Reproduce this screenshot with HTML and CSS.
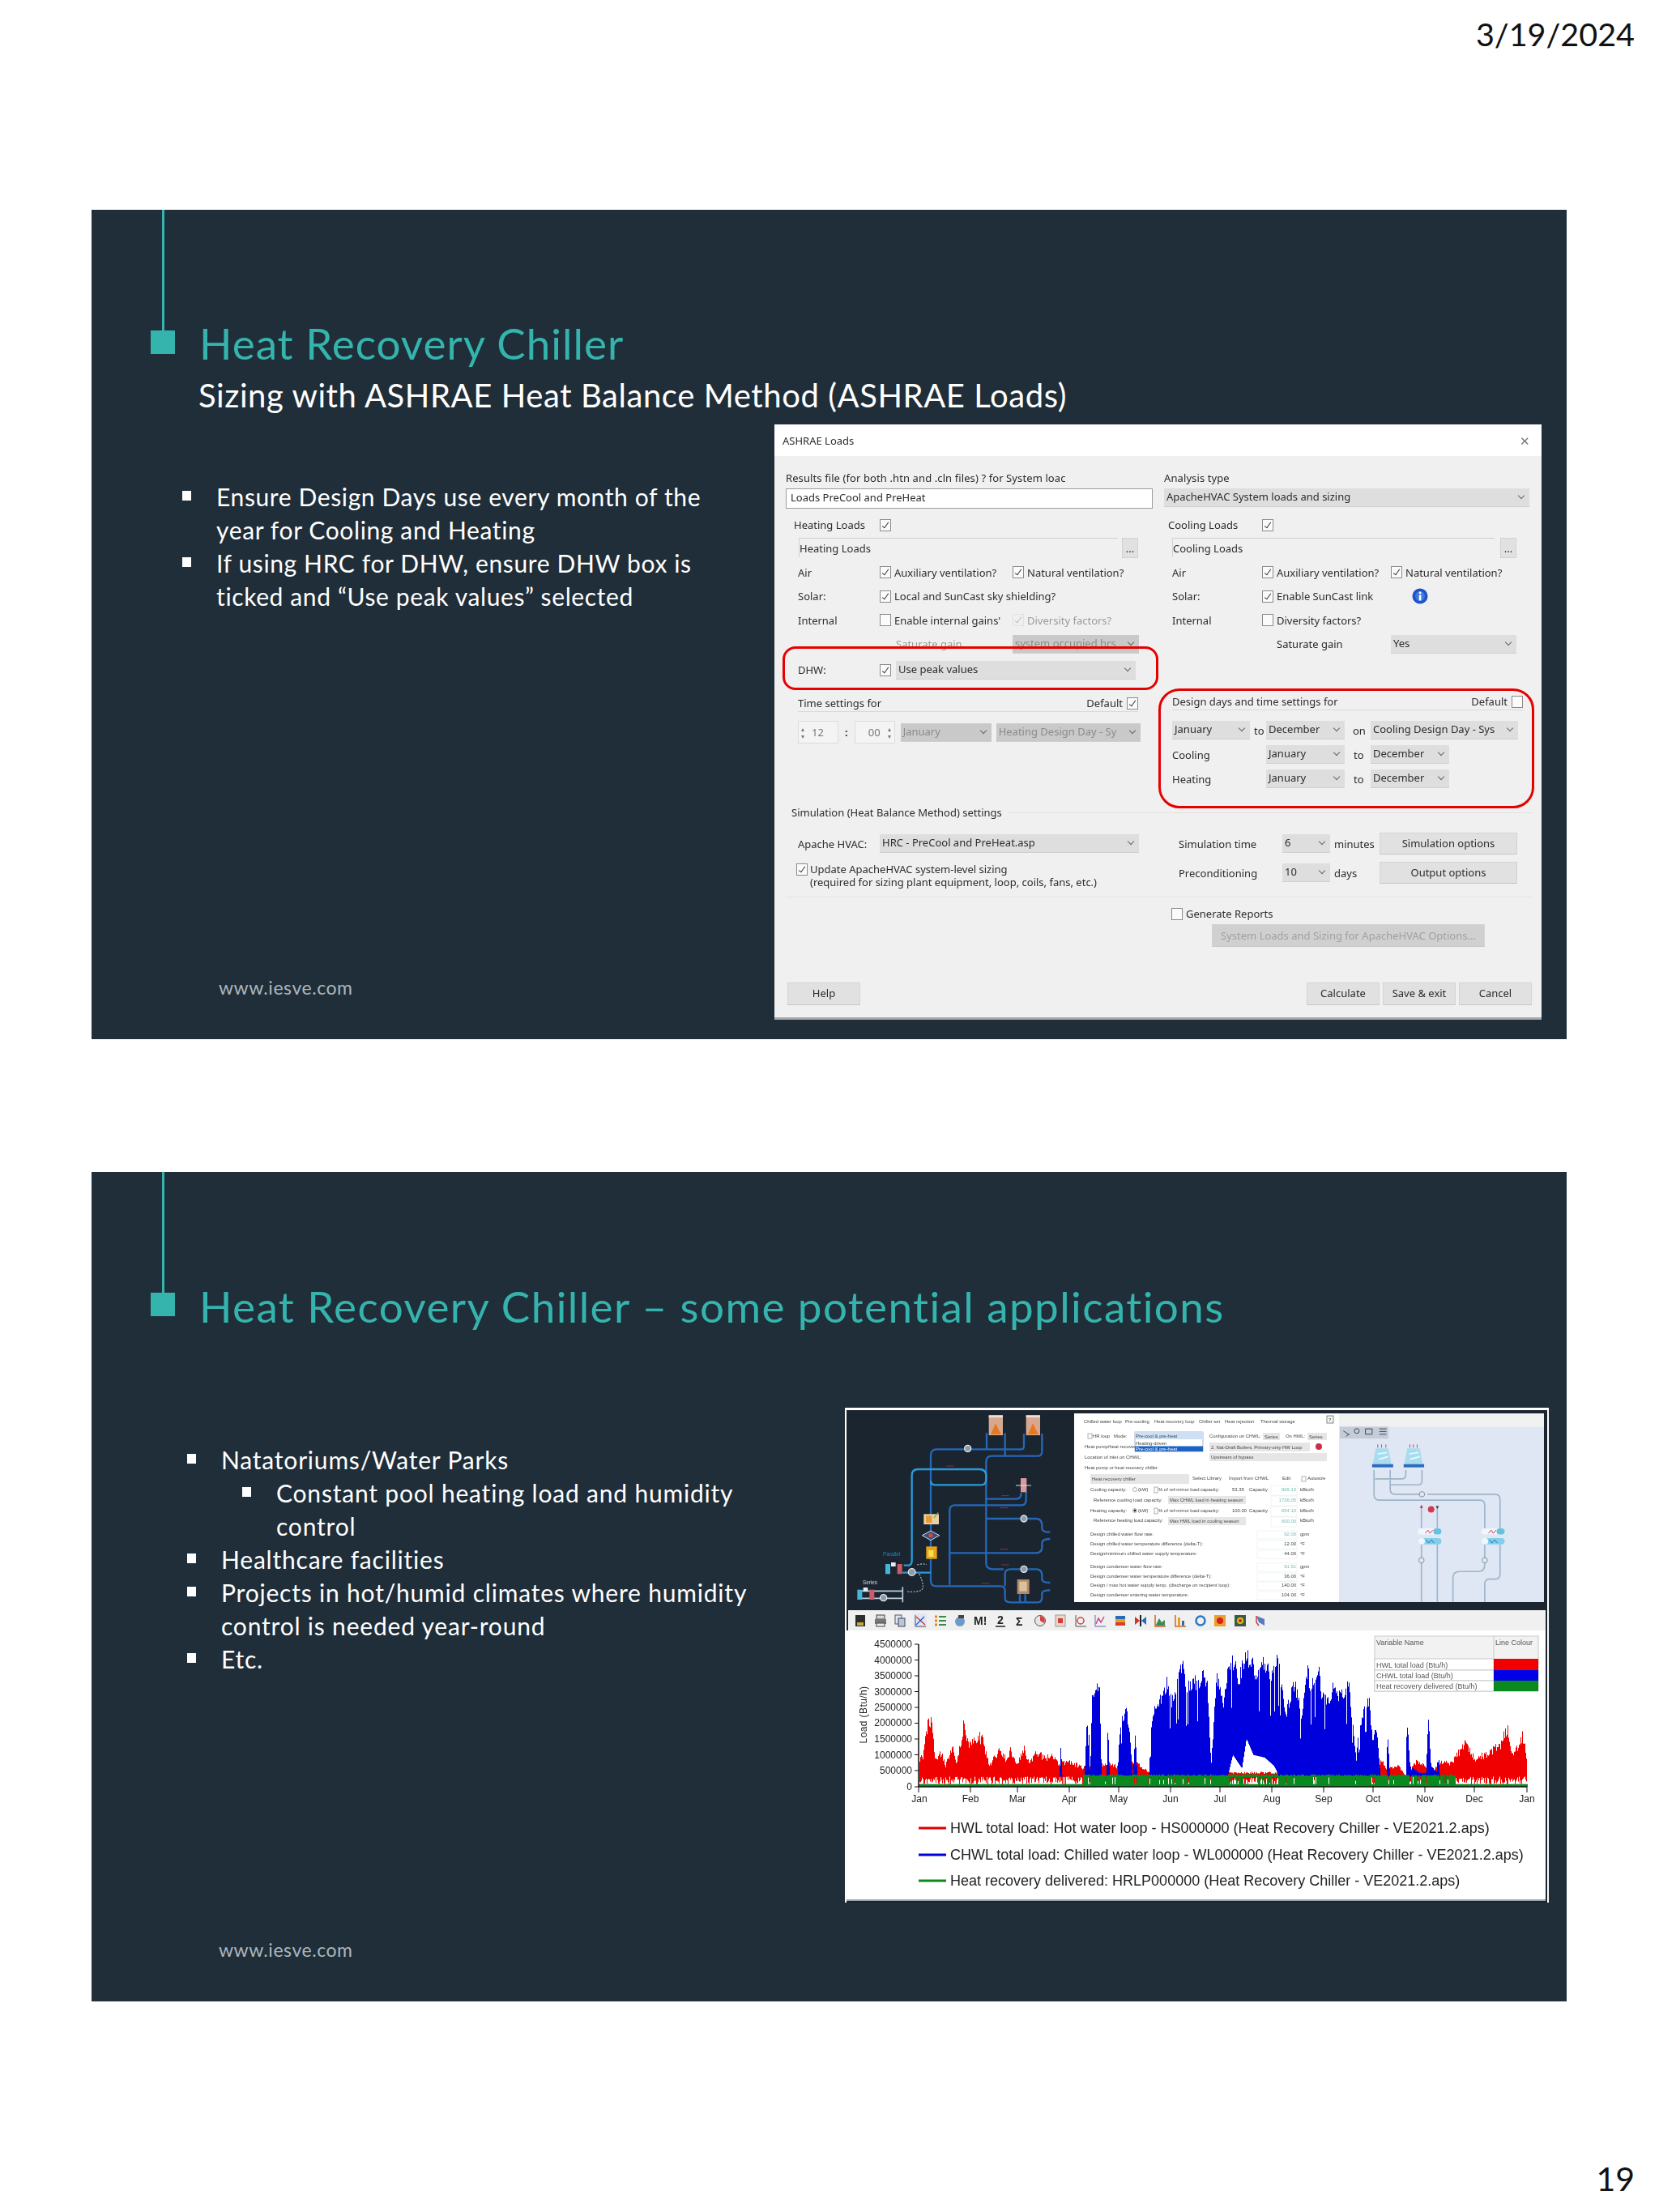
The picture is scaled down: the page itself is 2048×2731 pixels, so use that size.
FILE: index.html
```html
<!DOCTYPE html>
<html>
<head>
<meta charset="UTF-8">
<title>Heat Recovery Chiller</title>
<link rel="stylesheet" href="styles.css">
</head>
<body>
<div class="page">

<div class="date">3/19/2024</div>

<!-- slide 1 -->
<div class="slide slide-a">
  <div class="accent-line"></div>
  <div class="accent-box"></div>
  <div class="slide-head">
    <h1>Heat Recovery Chiller</h1>
    <h2>Sizing with ASHRAE Heat Balance Method (ASHRAE Loads)</h2>
  </div>
  <div class="slide-main">
    <div class="slide-text">
      <ul class="bullets">
        <li>Ensure Design Days use every month of the<br>year for Cooling and Heating</li>
        <li>If using HRC for DHW, ensure DHW box is<br>ticked and “Use peak values” selected</li>
      </ul>
      <div class="site">www.iesve.com</div>
    </div>

    <div class="dlg">
      <div class="dlg-title"><span>ASHRAE Loads</span><span class="dlg-x">✕</span></div>

      <div class="dlg-main">
        <div class="col-l">
          <div class="cap">Results file (for both .htn and .cln files) ? for System loac</div>
          <div class="input">Loads PreCool and PreHeat</div>
          <div class="grp-head"><span class="gh-w">Heating Loads</span><i class="chk on"></i></div>
          <div class="name-row"><div class="name-box">Heating Loads</div><div class="dots">...</div></div>
          <div class="opt"><span class="opt-l">Air</span><span class="opt-a"><i class="chk on"></i>Auxiliary ventilation?</span><span class="opt-a"><i class="chk on"></i>Natural ventilation?</span></div>
          <div class="opt"><span class="opt-l">Solar:</span><span class="opt-a wide"><i class="chk on"></i>Local and SunCast sky shielding?</span></div>
          <div class="opt"><span class="opt-l">Internal</span><span class="opt-a"><i class="chk"></i>Enable internal gains'</span><span class="opt-a off"><i class="chk on dim"></i>Diversity factors?</span></div>
          <div class="opt"><span class="opt-l"></span><span class="opt-a off sat-l">Saturate gain</span><div class="sel off w156">system occupied hrs</div></div>
          <div class="opt dhw"><span class="opt-l">DHW:</span><i class="chk on"></i><div class="sel w296">Use peak values</div></div>
          <div class="time-head"><span>Time settings for</span><span class="def">Default<i class="chk on"></i></span></div>
          <div class="time-row off">
            <div class="spin"><b>▴<br>▾</b>12</div><span class="colon">:</span>
            <div class="spin rev">00<b>▴<br>▾</b></div>
            <div class="sel off w112">January</div>
            <div class="sel off w178">Heating Design Day - Sy</div>
          </div>
        </div>

        <div class="col-r">
          <div class="cap">Analysis type</div>
          <div class="sel w451">ApacheHVAC System loads and sizing</div>
          <div class="grp-head r"><span class="gh-w">Cooling Loads</span><i class="chk on"></i></div>
          <div class="name-row r"><div class="name-box">Cooling Loads</div><div class="dots">...</div></div>
          <div class="opt r"><span class="opt-l">Air</span><span class="opt-b"><i class="chk on"></i>Auxiliary ventilation?</span><span class="opt-b"><i class="chk on"></i>Natural ventilation?</span></div>
          <div class="opt r"><span class="opt-l">Solar:</span><span class="opt-b"><i class="chk on"></i>Enable SunCast link</span>
            <svg class="info" viewBox="0 0 20 20"><circle cx="10" cy="10" r="9.5" fill="#1f52c8"/><circle cx="10" cy="10" r="6" fill="#3f78e0"/><rect x="8.8" y="8.5" width="2.6" height="7" fill="#fff"/><rect x="8.8" y="4.6" width="2.6" height="2.5" fill="#fff"/></svg></div>
          <div class="opt r"><span class="opt-l">Internal</span><span class="opt-b"><i class="chk"></i>Diversity factors?</span></div>
          <div class="opt r"><span class="opt-l"></span><span class="opt-b sat-r">Saturate gain</span><div class="sel w155">Yes</div></div>
          <div class="opt dhw r"></div>
          <div class="time-head r"><span>Design days and time settings for</span><span class="def">Default<i class="chk"></i></span></div>
          <div class="month-row first">
            <div class="sel w96">January</div><span class="to">to</span><div class="sel w97">December</div><span class="on-lab">on</span><div class="sel w182">Cooling Design Day - Sys</div>
          </div>
          <div class="month-row">
            <span class="m-lab">Cooling</span><div class="sel w97">January</div><span class="to2">to</span><div class="sel w97">December</div>
          </div>
          <div class="month-row">
            <span class="m-lab">Heating</span><div class="sel w97">January</div><span class="to2">to</span><div class="sel w97">December</div>
          </div>
        </div>
      </div>

      <div class="sim-cap"><span>Simulation (Heat Balance Method) settings</span></div>
      <div class="sim">
        <div class="sim-l">
          <div class="apache"><span class="opt-l short">Apache HVAC:</span><div class="sel w320">HRC - PreCool and PreHeat.asp</div></div>
          <div class="update"><i class="chk on"></i><div>Update ApacheHVAC system-level sizing<br>(required for sizing plant equipment, loop, coils, fans, etc.)</div></div>
        </div>
        <div class="sim-r">
          <div class="sim-row"><span class="sim-lab">Simulation time</span><div class="sel w59">6</div><span class="unit">minutes</span><div class="btn w170">Simulation options</div></div>
          <div class="sim-row"><span class="sim-lab">Preconditioning</span><div class="sel w59">10</div><span class="unit">days</span><div class="btn w170">Output options</div></div>
        </div>
      </div>

      <div class="reports">
        <div class="rep-head"><i class="chk"></i>Generate Reports</div>
        <div class="btn rep-btn off">System Loads and Sizing for ApacheHVAC Options...</div>
      </div>

      <div class="dlg-foot">
        <div class="btn w90">Help</div>
        <div class="foot-r"><div class="btn w90">Calculate</div><div class="btn w90">Save &amp; exit</div><div class="btn w90">Cancel</div></div>
      </div>

      <div class="ring ring-a"></div>
      <div class="ring ring-b"></div>
    </div>
  </div>
</div>

<!-- slide 2 -->
<div class="slide slide-b">
  <div class="accent-line"></div>
  <div class="accent-box"></div>
  <div class="slide-head">
    <h1>Heat Recovery Chiller – some potential applications</h1>
  </div>
  <div class="slide-main">
    <div class="slide-text">
      <ul class="bullets">
        <li>Natatoriums/Water Parks
          <ul><li>Constant pool heating load and humidity<br>control</li></ul>
        </li>
        <li>Healthcare facilities</li>
        <li>Projects in hot/humid climates where humidity<br>control is needed year-round</li>
        <li>Etc.</li>
      </ul>
      <div class="site">www.iesve.com</div>
    </div>

    <div class="shot">
      <div class="shot-top">
        <svg class="plant" viewBox="18 33 843 732">
          <g fill="none" stroke="#2568b8" stroke-width="7">
            <path d="M330 640V200Q330 178 352 178H665Q675 178 675 165V120"/>
            <path d="M535 600V225Q535 203 555 203H725Q742 203 742 185V120"/>
            <path d="M537 178V118M605 203V118"/>
            <path d="M330 640V665Q330 685 352 685H590Q605 685 605 705V730Q605 745 625 745H725Q742 745 742 725V712Q742 700 772 700"/>
            <path d="M605 685V640Q605 622 625 622H660M690 622H720Q742 622 742 645V660Q742 672 772 672"/>
            <path d="M660 745V715M680 745V715"/>
            <path d="M535 435H660M690 435H720Q742 435 742 460V470Q742 485 772 485"/>
            <path d="M400 562H720Q742 562 742 540V525Q742 510 772 510"/>
            <path d="M400 680V405Q400 385 420 385H665Q683 385 683 365V335"/>
            <path d="M535 362H645Q665 362 665 340"/>
            <path d="M535 600Q535 622 560 622H600"/>
          </g>
          <g fill="none" stroke="#2a9ad8" stroke-width="7">
            <path d="M230 608H245Q260 608 260 590V275Q260 252 282 252H510Q535 252 535 275V290Q535 310 515 310H345Q330 310 330 295"/>
            <path d="M225 635H330"/>
          </g>
          <path d="M65 703H225M65 730H225M226 688V745" fill="none" stroke="#b9cfdd" stroke-width="5"/>
          <path d="M280 606Q300 600 315 605M288 640Q310 690 295 700Q280 708 240 705" fill="none" stroke="#dfe8ee" stroke-width="3" stroke-dasharray="6 5"/>
          <path d="M388 240H415M592 350H620M585 395H615M585 548H615M592 606H620M518 675H548" stroke="#8c2f4a" stroke-width="3"/>
          <g fill="#d7a88f">
            <rect x="545" y="52" width="52" height="74"/>
            <rect x="683" y="52" width="52" height="74"/>
          </g>
          <path d="M570 82L552 122H590ZM708 82L690 122H728Z" fill="#e8781e"/>
          <rect x="545" y="52" width="52" height="8" fill="#efe0d2"/>
          <rect x="683" y="52" width="52" height="8" fill="#efe0d2"/>
          <rect x="663" y="285" width="22" height="52" fill="#d89aa0"/>
          <path d="M645 312H702" stroke="#e8e2d0" stroke-width="3"/>
          <rect x="304" y="418" width="56" height="38" fill="#e6d2a8"/>
          <rect x="312" y="424" width="22" height="26" fill="#e89a35"/>
          <path d="M342 432L358 412" stroke="#7fa84a" stroke-width="4"/>
          <path d="M298 497L330 480L362 497L330 515Z" fill="#38507e" stroke="#d8dde5" stroke-width="3"/>
          <circle cx="330" cy="497" r="8" fill="#d24a3a"/>
          <rect x="313" y="538" width="40" height="46" fill="#e8a31c"/>
          <rect x="322" y="552" width="18" height="24" fill="#f6df4a"/>
          <rect x="650" y="660" width="45" height="54" fill="#b58a66"/>
          <rect x="658" y="668" width="28" height="36" fill="#d9c2a0"/>
          <g fill="#46b6d6"><rect x="162" y="603" width="18" height="37"/><rect x="58" y="698" width="18" height="37"/></g>
          <g fill="#cf5a68"><rect x="206" y="603" width="18" height="37"/><rect x="103" y="698" width="18" height="37"/></g>
          <g fill="#e7ecef"><rect x="183" y="597" width="17" height="15"/><rect x="80" y="690" width="17" height="14"/></g>
          <g fill="#8f9bab" stroke="#e3e8ee" stroke-width="4">
            <circle cx="467" cy="175" r="12"/><circle cx="675" cy="435" r="12"/><circle cx="675" cy="622" r="12"/><circle cx="260" cy="633" r="13"/><circle cx="155" cy="728" r="12"/>
          </g>
          <text class="plant-lab blue" x="185" y="574" text-anchor="middle">Parallel</text>
          <text class="plant-lab" x="105" y="677" text-anchor="middle">Series</text>
        </svg>

        <div class="shot-panels">
          <svg class="form" viewBox="0 0 327 233">
            <g class="tx">
              <text x="12" y="12">Chilled water loop</text><text x="63" y="12">Pre-cooling</text><text x="99" y="12">Heat recovery loop</text><text x="154" y="12">Chiller set</text><text x="186" y="12">Heat rejection</text><text x="230" y="12">Thermal storage</text>
              <text x="23" y="30">HR loop</text><text x="49" y="30">Mode:</text><text x="167" y="30">Configuration on CHWL:</text><text x="261" y="30">On HWL:</text>
              <text x="13" y="43">Heat pump/heat recovery chiller:</text>
              <text x="13" y="56">Location of inlet on CHWL:</text>
              <text x="13" y="69">Heat pump or heat recovery chiller</text>
              <text x="146" y="82">Select Library</text><text x="191" y="82">Import from CHWL</text><text x="257" y="82">Edit</text><text x="288" y="82">Autosize</text>
              <text x="20" y="96">Cooling capacity:</text><text x="79" y="96">(kW)</text><text x="104" y="96">% of ref-mirror load capacity:</text><text x="195" y="96">53.35</text><text x="216" y="96">Capacity</text><text x="279" y="96">kBtu/h</text>
              <text x="24" y="109">Reference cooling load capacity:</text><text x="279" y="109">kBtu/h</text>
              <text x="20" y="122">Heating capacity:</text><text x="79" y="122">(kW)</text><text x="104" y="122">% of ref-mirror load capacity:</text><text x="195" y="122">100.00</text><text x="216" y="122">Capacity</text><text x="279" y="122">kBtu/h</text>
              <text x="24" y="134">Reference heating load capacity:</text><text x="279" y="134">kBtu/h</text>
              <text x="20" y="151">Design chilled water flow rate:</text><text x="279" y="151">gpm</text>
              <text x="20" y="163">Design chilled water temperature difference (delta-T):</text><text x="279" y="163">°F</text>
              <text x="20" y="175">Design/minimum chilled water supply temperature:</text><text x="279" y="175">°F</text>
              <text x="20" y="191">Design condenser water flow rate:</text><text x="279" y="191">gpm</text>
              <text x="20" y="203">Design condenser water temperature difference (delta-T):</text><text x="279" y="203">°F</text>
              <text x="20" y="214">Design / max hot water supply temp. (discharge on recipient loop):</text><text x="279" y="214">°F</text>
              <text x="20" y="226">Design condenser entering water temperature:</text><text x="279" y="226">°F</text>
            </g>
            <g class="fbox">
              <rect x="167" y="36" width="124" height="11"/><rect x="167" y="49" width="145" height="10"/>
              <rect x="233" y="24" width="21" height="9"/><rect x="288" y="24" width="24" height="9"/>
              <rect x="20" y="75" width="122" height="12"/>
              <rect x="116" y="102" width="96" height="10"/><rect x="116" y="128" width="96" height="10"/>
            </g>
            <g class="tx">
              <text x="235" y="31">Series</text><text x="290" y="31">Series</text>
              <text x="169" y="44">2. Nat-Draft Boilers, Primary-only HW Loop</text><text x="169" y="56">Upstream of bypass</text>
              <text x="22" y="83">Heat recovery chiller</text>
              <text x="118" y="109">Max CHWL load in heating season</text><text x="118" y="135">Max HWL load in cooling season</text>
            </g>
            <g class="fin">
              <rect x="243" y="89" width="32" height="12"/><rect x="243" y="102" width="32" height="12"/><rect x="243" y="115" width="32" height="12"/><rect x="243" y="128" width="32" height="12"/>
              <rect x="226" y="145" width="49" height="10"/><rect x="226" y="157" width="49" height="10"/><rect x="226" y="169" width="49" height="10"/><rect x="226" y="185" width="49" height="10"/><rect x="226" y="197" width="49" height="10"/><rect x="226" y="208" width="49" height="10"/><rect x="226" y="220" width="49" height="10"/>
            </g>
            <g class="tx end teal"><text x="274" y="96">969.13</text><text x="274" y="109">1726.05</text><text x="274" y="122">654.10</text><text x="274" y="135">600.00</text><text x="274" y="151">92.00</text><text x="274" y="191">91.51</text></g>
            <g class="tx end"><text x="274" y="163">12.00</text><text x="274" y="175">44.00</text><text x="274" y="203">36.00</text><text x="274" y="214">140.00</text><text x="274" y="226">104.00</text></g>
            <rect x="75" y="23" width="84" height="24" fill="#fff" stroke="#6a86b8" stroke-width=".6"/>
            <rect x="75" y="23" width="84" height="9" fill="#cfe0f4"/>
            <rect x="75" y="40.5" width="84" height="6.5" fill="#1a62c4"/>
            <g class="tx"><text x="76" y="30">Pre-cool &amp; pre-heat</text><text x="76" y="38.5">Heating-driven</text><text class="wt" x="76" y="46">Pre-cool &amp; pre-heat</text></g>
            <g fill="none" stroke="#666" stroke-width=".5"><rect x="17" y="25" width="5" height="6"/><rect x="99" y="91" width="4" height="7"/><rect x="99" y="117" width="4" height="7"/><rect x="281" y="78" width="5" height="6"/><circle cx="75" cy="94" r="2.5"/><circle cx="75" cy="120" r="2.5"/></g>
            <circle cx="75" cy="120" r="1.4" fill="#222"/>
            <circle cx="302" cy="41" r="4" fill="#c8304a"/>
            <rect x="312" y="3" width="8" height="9" fill="#f4f4f4" stroke="#555" stroke-width=".7"/>
            <text class="tx" x="314" y="10">?</text>
          </svg>

          <svg class="towers" viewBox="42 45 761 700">
            <rect x="42" y="45" width="761" height="49" fill="#f1f1f1"/>
            <rect x="45" y="94" width="180" height="44" fill="#c5ccd8"/>
            <g fill="none" stroke="#3d4a5a" stroke-width="3">
              <path d="M58 110L80 124M68 130L80 120"/><circle cx="108" cy="110" r="9"/><path d="M140 102H165V122H140ZM192 102H218M192 112H218M192 122H218"/>
            </g>
            <g fill="none" stroke="#9fb4c9" stroke-width="5">
              <path d="M172 255V345Q172 367 195 367H565Q583 367 583 385V475"/>
              <path d="M232 255V325Q232 345 250 345H340M370 345H620Q640 345 640 365V475"/>
              <path d="M232 310H335Q350 310 350 295V255"/>
              <path d="M175 288H275Q290 288 290 270V255"/>
              <path d="M348 392V470M407 392V470M348 530V745M407 530V745"/>
              <path d="M583 530V605Q583 632 560 632H490Q465 632 465 655V745"/>
              <path d="M640 530V640Q640 660 620 660H600Q583 660 583 680V745"/>
            </g>
            <g fill="#a8dcf0">
              <path d="M178 175H225L236 232H168Z"/><path d="M295 175H342L352 232H285Z"/>
            </g>
            <path d="M185 195L220 190M190 215L225 205M302 195L337 190M305 215L342 205" stroke="#e8f7fc" stroke-width="5"/>
            <g fill="#2a6dba"><rect x="165" y="233" width="78" height="12"/><rect x="282" y="233" width="76" height="12"/></g>
            <path d="M186 172V160M200 172V160M216 172V160M305 172V160M318 172V160M332 172V160" stroke="#c74a62" stroke-width="3"/>
            <g>
              <rect x="335" y="472" width="87" height="22" rx="11" fill="#f2f6fb"/><rect x="392" y="472" width="30" height="22" rx="11" fill="#63c2e0"/><path d="M362 490L372 478L380 490L390 478" fill="none" stroke="#c9405a" stroke-width="3"/>
              <rect x="335" y="508" width="87" height="23" rx="11" fill="#7fd0ea"/><rect x="335" y="508" width="26" height="23" rx="11" fill="#f2f6fb"/><path d="M365 514L375 526L385 514L395 526" fill="none" stroke="#2a6dba" stroke-width="3"/>
            </g>
            <g transform="translate(235)">
              <rect x="335" y="472" width="87" height="22" rx="11" fill="#f2f6fb"/><rect x="392" y="472" width="30" height="22" rx="11" fill="#63c2e0"/><path d="M362 490L372 478L380 490L390 478" fill="none" stroke="#c9405a" stroke-width="3"/>
              <rect x="335" y="508" width="87" height="23" rx="11" fill="#7fd0ea"/><rect x="335" y="508" width="26" height="23" rx="11" fill="#f2f6fb"/><path d="M365 514L375 526L385 514L395 526" fill="none" stroke="#2a6dba" stroke-width="3"/>
            </g>
            <g fill="#dfe6ee" stroke="#85929f" stroke-width="3"><circle cx="348" cy="590" r="10"/><circle cx="583" cy="590" r="10"/><circle cx="350" cy="345" r="10"/></g>
            <circle cx="384" cy="401" r="12" fill="#d8384f"/>
            <path d="M342 396L348 384L354 396Z" fill="#c7304c"/><path d="M401 388L407 400L413 388Z" fill="#3d4a5a"/>
          </svg>
        </div>
      </div>

      <div class="tool-strip">
        <svg viewBox="0 0 16 16"><rect x="2" y="1" width="12" height="14" fill="#2b2f2b"/><rect x="4" y="10" width="8" height="4" fill="#c9a63a"/></svg>
        <svg viewBox="0 0 16 16"><rect x="3" y="1" width="10" height="5" fill="#d8d8d8" stroke="#444"/><rect x="1" y="6" width="14" height="6" fill="#777"/><rect x="3" y="11" width="10" height="4" fill="#eee" stroke="#444"/></svg>
        <svg viewBox="0 0 16 16"><rect x="2" y="1" width="8" height="11" fill="#dfe6f2" stroke="#556"/><rect x="6" y="5" width="8" height="10" fill="#b9c6e0" stroke="#445"/></svg>
        <svg class="picked" viewBox="0 0 16 16"><path d="M2 1V15H15" fill="none" stroke="#555"/><path d="M3 3L14 13" stroke="#d03030" stroke-width="1.3"/><path d="M3 13L13 3" stroke="#3050c8" stroke-width="1.3"/></svg>
        <svg viewBox="0 0 16 16"><path d="M1 3H4M1 8H4M1 13H4" stroke="#e08a20" stroke-width="3"/><path d="M6 3H15M6 8H15M6 13H15" stroke="#3a8a4a" stroke-width="2"/></svg>
        <svg viewBox="0 0 16 16"><circle cx="8" cy="9" r="6" fill="#6e9ac8"/><rect x="6" y="1" width="7" height="4" fill="#444"/></svg>
        <svg viewBox="0 0 16 16"><text class="ico-t" x="0" y="13">M!</text></svg>
        <svg viewBox="0 0 16 16"><text class="ico-t" x="4" y="12">2</text><path d="M2 15H14" stroke="#222" stroke-width="1.5"/></svg>
        <svg viewBox="0 0 16 16"><text class="ico-t" x="2" y="14">Σ</text></svg>
        <svg viewBox="0 0 16 16"><circle cx="8" cy="8" r="6.5" fill="#e8e4e0" stroke="#555"/><path d="M8 8V2A6 6 0 0 1 13 11Z" fill="#d84040"/></svg>
        <svg viewBox="0 0 16 16"><rect x="2" y="1" width="12" height="14" fill="#e8d9c8" stroke="#999"/><rect x="5" y="5" width="6" height="6" fill="#d83a3a"/></svg>
        <svg viewBox="0 0 16 16"><path d="M2 1V15H15" fill="none" stroke="#555"/><circle cx="8" cy="8" r="4" fill="none" stroke="#d04040" stroke-width="1.5"/></svg>
        <svg viewBox="0 0 16 16"><path d="M2 1V15H15" fill="none" stroke="#5a6fb8"/><path d="M3 12L6 5L9 10L13 3" fill="none" stroke="#c84a8a" stroke-width="1.5"/></svg>
        <svg viewBox="0 0 16 16"><rect x="2" y="2" width="12" height="4" fill="#2a6ab8"/><rect x="2" y="6" width="12" height="4" fill="#e8a020"/><rect x="2" y="10" width="12" height="4" fill="#d04030"/></svg>
        <svg viewBox="0 0 16 16"><path d="M8 1V15" stroke="#222" stroke-width="2"/><path d="M1 3L7 8L1 13Z" fill="#d03030"/><path d="M15 3L9 8L15 13Z" fill="#2a6ab8"/></svg>
        <svg viewBox="0 0 16 16"><path d="M2 1V15H15" fill="none" stroke="#c86a20" stroke-width="1.5"/><path d="M3 13L7 5L10 10L14 7V14H3Z" fill="#3a8a5a"/></svg>
        <svg viewBox="0 0 16 16"><path d="M2 1V15H15" fill="none" stroke="#c86a20" stroke-width="1.5"/><rect x="5" y="4" width="3" height="10" fill="#e8a020"/><rect x="10" y="8" width="3" height="6" fill="#2a6ab8"/></svg>
        <svg viewBox="0 0 16 16"><circle cx="8" cy="8" r="5.5" fill="none" stroke="#2a78c8" stroke-width="2.5"/></svg>
        <svg viewBox="0 0 16 16"><rect x="1" y="1" width="14" height="14" fill="#e8a030"/><circle cx="8" cy="8" r="4" fill="#d82020"/></svg>
        <svg viewBox="0 0 16 16"><rect x="1" y="1" width="14" height="14" fill="#3a5a4a"/><circle cx="8" cy="8" r="4" fill="#e8c020"/><circle cx="8" cy="8" r="2" fill="#c02020"/></svg>
        <svg viewBox="0 0 16 16"><path d="M3 2L13 6V14L6 10Z" fill="#5a7ac8"/><path d="M3 2V10L6 14" fill="none" stroke="#c84040" stroke-width="1.5"/></svg>
      </div>

      <svg class="chart" id="chart" viewBox="1046 2013 863 332">
        <g id="series"></g>
        <path class="axis" d="M1135 2030V2206H1886"/>
        <path class="tick" d="M1130 2030H1135M1130 2049.5H1135M1130 2069H1135M1130 2088.5H1135M1130 2108H1135M1130 2127.5H1135M1130 2147H1135M1130 2166.5H1135M1130 2186H1135M1130 2206H1135"/>
        <path class="tick" d="M1135 2206V2213M1199 2206V2213M1257 2206V2213M1321 2206V2213M1382 2206V2213M1446 2206V2213M1507 2206V2213M1571 2206V2213M1635 2206V2213M1696 2206V2213M1760 2206V2213M1821 2206V2213M1886 2206V2213"/>
        <g class="y-lab">
          <text x="1127" y="2034">4500000</text><text x="1127" y="2054">4000000</text><text x="1127" y="2073">3500000</text><text x="1127" y="2093">3000000</text><text x="1127" y="2112">2500000</text><text x="1127" y="2131">2000000</text><text x="1127" y="2151">1500000</text><text x="1127" y="2171">1000000</text><text x="1127" y="2190">500000</text><text x="1127" y="2210">0</text>
        </g>
        <text class="y-title" transform="translate(1071 2117) rotate(-90)">Load (Btu/h)</text>
        <g class="x-lab">
          <text x="1136" y="2225">Jan</text><text x="1199" y="2225">Feb</text><text x="1257" y="2225">Mar</text><text x="1321" y="2225">Apr</text><text x="1382" y="2225">May</text><text x="1446" y="2225">Jun</text><text x="1507" y="2225">Jul</text><text x="1571" y="2225">Aug</text><text x="1635" y="2225">Sep</text><text x="1696" y="2225">Oct</text><text x="1760" y="2225">Nov</text><text x="1821" y="2225">Dec</text><text x="1886" y="2225">Jan</text>
        </g>
        <g class="key">
          <rect x="1698" y="2020" width="202" height="68" fill="#f2f2f2" stroke="#c9c9c9"/>
          <rect x="1698" y="2048" width="147" height="14" fill="#fff" stroke="#c9c9c9"/>
          <rect x="1698" y="2062" width="147" height="13" fill="#fff" stroke="#c9c9c9"/>
          <rect x="1698" y="2075" width="147" height="13" fill="#fff" stroke="#c9c9c9"/>
          <path d="M1845 2020V2048" stroke="#c9c9c9"/>
          <rect x="1845" y="2048" width="55" height="14" fill="#f00000"/>
          <rect x="1845" y="2062" width="55" height="13" fill="#0000e6"/>
          <rect x="1845" y="2075" width="55" height="13" fill="#0a8a1e"/>
          <text x="1700" y="2031">Variable Name</text><text x="1847" y="2031">Line Colour</text>
          <text x="1700" y="2059">HWL total load (Btu/h)</text><text x="1700" y="2072">CHWL total load (Btu/h)</text><text x="1700" y="2085">Heat recovery delivered (Btu/h)</text>
        </g>
        <g class="legend">
          <path d="M1135 2257H1169" stroke="#e00000"/><path d="M1135 2290H1169" stroke="#0000d8"/><path d="M1135 2322H1169" stroke="#0a8a1e"/>
          <text x="1174" y="2263">HWL total load: Hot water loop - HS000000 (Heat Recovery Chiller - VE2021.2.aps)</text>
          <text x="1174" y="2296">CHWL total load: Chilled water loop - WL000000 (Heat Recovery Chiller - VE2021.2.aps)</text>
          <text x="1174" y="2328">Heat recovery delivered: HRLP000000 (Heat Recovery Chiller - VE2021.2.aps)</text>
        </g>
      </svg>
    </div>
  </div>
</div>

<div class="pagenum">19</div>
</div>

<script src="chart.js"></script>
</body>
</html>
```

FILE: styles.css
```css
body {
  margin: 0;
  background: #fff;
  font-family: Lato, "Open Sans", sans-serif;
}

.page {
  width: 2048px;
  height: 2731px;
  overflow: hidden;
}

.date {
  height: 242px;
  padding: 17px 30px 0 0;
  text-align: right;
  font-size: 39.5px;
  line-height: 50px;
  color: #111;
}

.pagenum {
  margin-top: 194px;
  padding-right: 30px;
  text-align: right;
  font-size: 41px;
  line-height: 50px;
  color: #111;
}

/* slides */
.slide {
  position: relative;
  width: 1821px;
  height: 1024px;
  margin-left: 113px;
  background: #1f2e39;
  display: flex;
  flex-direction: column;
}

.slide-b { margin-top: 164px; }

.accent-line {
  position: absolute;
  left: 87px;
  top: 0;
  width: 3px;
  height: 149px;
  background: #35b4ae;
}

.accent-box {
  position: absolute;
  left: 73px;
  top: 149px;
  width: 30px;
  height: 29px;
  background: #35b4ae;
}

.slide-head {
  padding: 135px 0 0 133px;
  height: 130px;
}

.slide-b .slide-head { height: 155px; padding-top: 136px; }

.slide-head h1 {
  margin: 0;
  font-size: 53px;
  line-height: 60px;
  font-weight: 400;
  letter-spacing: 1px;
  color: #35b4ae;
}

.slide-b .slide-head h1 { letter-spacing: 1.4px; }

.slide-head h2 {
  margin: 11px 0 0 -1px;
  font-size: 40px;
  line-height: 46px;
  font-weight: 400;
  letter-spacing: 0.58px;
  color: #fff;
}

.slide-main {
  flex: 1;
  display: grid;
  grid-template-columns: 843px 1fr;
}

.slide-b .slide-main { grid-template-columns: 930px 1fr; }

.slide-text {
  display: flex;
  flex-direction: column;
  padding-bottom: 49px;
}

.site {
  margin-top: auto;
  padding-left: 157px;
  font-size: 23px;
  line-height: 30px;
  letter-spacing: 0.55px;
  color: #aeb6bc;
}

.bullets {
  margin: 0;
  padding: 69px 0 0 155px;
  list-style: none;
  font-size: 30px;
  line-height: 41px;
  letter-spacing: 0.7px;
  color: #fff;
}

.slide-a .bullets { letter-spacing: 0.62px; margin-left: -1px; }

.slide-b .bullets { padding: 44px 0 0 160px; letter-spacing: 0.8px; }

.bullets ul {
  margin: 0;
  padding: 0 0 0 68px;
  list-style: none;
}

.bullets li::before {
  content: "";
  display: inline-block;
  width: 11px;
  height: 12px;
  margin-left: -42px;
  margin-right: 31px;
  vertical-align: 7px;
  background: #fff;
}

/* ashrae dialog */
.dlg {
  position: relative;
  box-sizing: border-box;
  width: 947px;
  height: 735px;
  display: flex;
  flex-direction: column;
  background: #f0f0f0;
  border-bottom: 3px solid #a8a8a8;
  font-family: "Noto Sans", sans-serif;
  font-size: 13px;
  color: #2c2c2c;
  filter: blur(0.35px);
}

.dlg-title {
  height: 39px;
  flex: none;
  display: flex;
  justify-content: space-between;
  align-items: center;
  padding: 0 14px 0 10px;
  background: #fff;
}

.dlg-x { color: #777; font-size: 15px; }

.dlg-main {
  height: 428px;
  flex: none;
  display: grid;
  grid-template-columns: 467px 1fr;
  padding-left: 14px;
}

.cap {
  height: 24px;
  margin-top: 16px;
  line-height: 22px;
  letter-spacing: 0.1px;
}

.input {
  box-sizing: border-box;
  width: 453px;
  height: 25px;
  padding-left: 5px;
  line-height: 20px;
  background: #fff;
  border: 1px solid #9c9c9c;
}

.sel {
  position: relative;
  box-sizing: border-box;
  flex: none;
  height: 23px;
  padding-left: 3px;
  line-height: 21px;
  white-space: nowrap;
  overflow: hidden;
  background: #dedede;
  border-bottom: 1px solid #cfcfcf;
}

.sel::after {
  content: "";
  position: absolute;
  right: 7px;
  top: 6px;
  width: 5px;
  height: 5px;
  border-right: 1px solid #666;
  border-bottom: 1px solid #666;
  transform: rotate(45deg);
}

.sel.off { background: #c9c9c9; color: #8b8b8b; }

.w59 { width: 59px; }
.w96 { width: 96px; }
.w97 { width: 97px; }
.w112 { width: 112px; }
.w155 { width: 155px; }
.w156 { width: 156px; }
.w178 { width: 178px; }
.w182 { width: 182px; }
.w296 { width: 296px; }
.w320 { width: 320px; }
.w451 { width: 451px; }
.w90 { width: 90px; }
.w170 { width: 170px; }

.chk {
  position: relative;
  display: inline-block;
  flex: none;
  box-sizing: border-box;
  width: 14px;
  height: 15px;
  margin-right: 4px;
  background: #fbfbfb;
  border: 1px solid #8a8a8a;
}

.chk.on::after {
  content: "";
  position: absolute;
  left: 4px;
  top: 1px;
  width: 3px;
  height: 8px;
  border-right: 1px solid #333;
  border-bottom: 1px solid #333;
  transform: rotate(35deg);
}

.chk.dim { background: none; border-color: #e2e2e2; }
.chk.dim::after { border-color: #bbb; }

.grp-head {
  height: 20px;
  margin-top: 10px;
  padding-left: 10px;
  display: flex;
  align-items: center;
}

.grp-head.r { margin-top: 12px; padding-left: 5px; }
.gh-w { width: 106px; }
.grp-head.r .gh-w { width: 116px; }

.name-row {
  height: 24px;
  margin-top: 6px;
  padding-left: 16px;
  display: flex;
  gap: 5px;
}

.name-row.r { margin-top: 6px; padding-left: 10px; gap: 7px; }

.name-box {
  width: 394px;
  line-height: 24px;
  border-top: 1px solid #d0d0d0;
  border-left: 1px solid #d0d0d0;
  box-sizing: border-box;
}

.name-row.r .name-box { width: 398px; }

.dots {
  width: 20px;
  height: 25px;
  background: #e1e1e1;
  border: 1px solid #d2d2d2;
  box-sizing: border-box;
  text-align: center;
  line-height: 25px;
}

.opt {
  height: 29.5px;
  padding-left: 15px;
  display: flex;
  align-items: center;
}

.name-row + .opt { margin-top: 4px; }

.opt.r { padding-left: 10px; }

.opt-l { width: 101px; flex: none; }
.opt.r .opt-l { width: 111px; }

.opt-a { width: 164px; flex: none; display: flex; align-items: center; white-space: nowrap; }
.opt-a.wide { width: 320px; }
.opt-a.off, .off { color: #9a9a9a; }
.sat-l { padding-left: 20px; box-sizing: border-box; }

.opt-b { width: 159px; flex: none; display: flex; align-items: center; white-space: nowrap; }
.sat-r { padding-left: 18px; box-sizing: border-box; }

.info { width: 20px; height: 20px; margin-left: 26px; }

.opt.dhw { height: 30px; margin-top: 2px; }
.opt.dhw.r { height: 27px; margin-top: 3px; }
.opt.dhw .chk { margin-right: 6px; }

.time-head {
  box-sizing: border-box;
  height: 21px;
  margin: 16px 15px 0 15px;
  display: flex;
  justify-content: space-between;
  align-items: center;
  border-bottom: 1px solid #dadada;
  width: 420px;
}

.time-head.r { width: 433px; margin-left: 10px; }

.def { display: flex; align-items: center; gap: 5px; }
.def .chk { margin: 0; }

.time-row {
  margin: 11px 0 0 15px;
  display: flex;
  align-items: center;
  gap: 6px;
}

.time-row .sel { color: #8b8b8b; }

.spin {
  box-sizing: border-box;
  width: 50px;
  height: 28px;
  display: flex;
  align-items: center;
  gap: 9px;
  background: #f4f4f4;
  border: 1px solid #dcdcdc;
  color: #777;
}

.spin.rev { justify-content: flex-end; margin-right: 1px; }
.spin b { font-size: 8px; line-height: 9px; font-weight: 400; padding-left: 3px; }
.spin.rev b { padding: 0 4px 0 0; }
.colon { margin: 0 2px; color: #333; font-weight: 700; }

.month-row {
  height: 23px;
  margin: 7px 0 0 10px;
  display: flex;
  align-items: center;
}

.month-row.first { margin-top: 13px; }
.to { width: 20px; padding-left: 5px; box-sizing: border-box; }
.on-lab { width: 32px; padding-left: 10px; box-sizing: border-box; }
.to2 { width: 32px; padding-left: 11px; box-sizing: border-box; }
.m-lab { width: 116px; }

.sim-cap {
  flex: none;
  height: 24px;
  margin-left: 21px;
  margin-right: 11px;
  line-height: 24px;
  display: flex;
  align-items: center;
  gap: 8px;
}

.sim-cap::after {
  content: "";
  flex: 1;
  border-top: 1px solid #e2e2e2;
}

.sim {
  flex: none;
  height: 93px;
  margin: 0 11px 0 14px;
  display: grid;
  grid-template-columns: 467px 1fr;
  padding-top: 13px;
  box-sizing: border-box;
  border-bottom: 1px solid #e2e2e2;
}

.sim-l { padding: 2px 0 0 15px; }
.apache { display: flex; align-items: center; }
.opt-l.short { width: 101px; }
.update { display: flex; margin: 12px 0 0 -2px; line-height: 16px; }
.update .chk { margin: 1px 3px 0 0; }

.sim-r { padding-left: 18px; display: flex; flex-direction: column; gap: 9px; }
.sim-row { height: 27px; display: flex; align-items: center; }
.sim-lab { width: 128px; flex: none; }
.unit { width: 61px; flex: none; padding-left: 5px; box-sizing: border-box; }

.btn {
  flex: none;
  box-sizing: border-box;
  height: 27px;
  line-height: 25px;
  text-align: center;
  background: #e1e1e1;
  border: 1px solid #d4d4d4;
  border-bottom-color: #c6c6c6;
}

.reports {
  flex: none;
  margin: 10px 0 0 490px;
}

.rep-head { height: 20px; display: flex; align-items: center; }
.rep-head .chk { margin-right: 4px; }

.rep-btn {
  width: 337px;
  height: 28px;
  margin: 3px 0 0 50px;
  line-height: 26px;
  background: #d0d0d0;
  color: #a0a0a0;
}

.dlg-foot {
  margin-top: auto;
  padding: 0 12px 15px 16px;
  display: flex;
  justify-content: space-between;
}

.dlg-foot .btn { height: 28px; }
.foot-r { display: flex; gap: 4px; }

.ring {
  position: absolute;
  box-sizing: border-box;
  border: 3px solid #e60000;
}

.ring-a { left: 10px; top: 274px; width: 464px; height: 54px; border-radius: 16px; }
.ring-b { left: 474px; top: 326px; width: 464px; height: 148px; border-radius: 26px; }

/* pasted picture in slide 2 */
.shot {
  box-sizing: border-box;
  width: 869px;
  height: 611px;
  display: flex;
  flex-direction: column;
  background: #1a2530;
  border: 2px solid #fff;
  border-top-width: 3px;
  border-bottom: 0;
  filter: blur(0.35px);
}

.shot-top {
  flex: none;
  height: 244px;
  display: flex;
}

.plant {
  display: block;
  width: 281px;
  height: 244px;
  flex: none;
}

.plant-lab { font-family: "Liberation Sans", sans-serif; font-size: 19px; fill: #cfd8dc; }
.plant-lab.blue { fill: #1a8ac8; }

.shot-panels {
  display: flex;
  padding-top: 4px;
  height: 233px;
}

.form { display: block; width: 327px; height: 233px; background: #fff; flex: none; }
.towers { display: block; width: 253px; height: 233px; background: #dfe7f4; flex: none; }

.tx { font-family: "Liberation Sans", sans-serif; font-size: 5.9px; fill: #444; }
.tx .wt { fill: #fff; }
.end { text-anchor: end; }
.teal { fill: #6cbdb8; }
.fbox rect { fill: #e6e6e6; }
.fin rect { fill: #fff; stroke: #e2e8e8; stroke-width: .5; }

.tool-strip {
  flex: none;
  height: 25px;
  margin: 3px 2px 0 2px;
  padding-left: 7px;
  display: flex;
  align-items: center;
  gap: 8.7px;
  background: #f0f0f0;
}

.tool-strip svg { width: 16px; height: 18px; flex: none; }
.tool-strip .picked { background: #dfe6f4; }
.ico-t { font-family: "Liberation Sans", sans-serif; font-size: 14px; font-weight: 700; fill: #222; }

.chart {
  display: block;
  width: 863px;
  height: 332px;
  flex: none;
  background: #fff;
  border-bottom: 2px solid #9aa5ad;
  font-family: "Liberation Sans", sans-serif;
}

.axis { fill: none; stroke: #111; stroke-width: 1.5; }
.tick { fill: none; stroke: #111; stroke-width: 1; }
.y-lab { font-size: 12px; text-anchor: end; fill: #222; }
.x-lab { font-size: 12px; text-anchor: middle; fill: #222; }
.y-title { font-size: 12px; text-anchor: middle; fill: #222; letter-spacing: .4px; }
.key { font-size: 9px; fill: #555; }
.legend { font-size: 18px; fill: #222; }
.legend path { stroke-width: 3; fill: none; }
```

FILE: chart.js
```js
// fills the Load (Btu/h) plot, envelopes read off the picture (x, y of the top of each burst)
var left = 1135, right = 1886, base = 2206;

var redPeaks = [[170,560],[178,555],[190,400],[198,405],[205,570],[218,540],[228,590],[245,515],[252,590],[268,410],[275,500],[288,480],[300,450],[312,500],[325,590],[345,530],[360,560],[372,525],[385,590],[400,520],[412,585],[428,535],[445,560],[460,550],[480,590],[495,570],[530,600],[545,590],[575,590],[590,585],[610,600],[640,570],[660,600],[680,622],[1180,622],[1185,560],[1195,600],[1225,590],[1240,640],[1265,570],[1285,600],[1300,610],[1316,580],[1340,580],[1375,490],[1390,560],[1420,540],[1445,510],[1463,430],[1475,540],[1498,465],[1507,560]];

var bluePeaks = [[478,677],[481,510],[486,677],[533,677],[538,430],[543,430],[546,640],[550,320],[562,270],[567,300],[571,640],[582,640],[585,440],[589,640],[606,640],[612,430],[625,370],[632,450],[640,640],[645,460],[650,640],[675,640],[682,400],[695,340],[705,330],[715,265],[725,340],[735,290],[750,175],[757,300],[770,260],[785,270],[795,190],[805,300],[812,600],[825,230],[840,350],[853,175],[863,180],[872,260],[887,165],[900,160],[910,220],[920,195],[935,200],[945,240],[960,155],[968,300],[975,400],[985,330],[995,265],[1003,320],[1010,400],[1025,205],[1030,300],[1048,200],[1055,300],[1068,340],[1080,290],[1097,315],[1115,275],[1122,400],[1130,550],[1150,340],[1160,335],[1167,500],[1175,430],[1185,640],[1198,640],[1200,445],[1206,660],[1240,660],[1243,405],[1250,600],[1270,625],[1285,625],[1290,405],[1296,600],[1308,620],[1312,535],[1316,660]];

var blueFloor = [[850,630],[860,560],[880,610],[890,500],[905,560],[930,570],[950,600],[960,630]];

var seed = 4711;
function rnd() {
  seed = (seed * 16807) % 2147483647;
  return seed / 2147483647;
}

function lookup(pts, zx) {
  if (zx < pts[0][0] || zx > pts[pts.length - 1][0]) return null;
  for (var i = 1; i < pts.length; i++) {
    if (zx <= pts[i][0]) {
      var t = (zx - pts[i - 1][0]) / (pts[i][0] - pts[i - 1][0]);
      return pts[i - 1][1] + (pts[i][1] - pts[i - 1][1]) * t;
    }
  }
  return null;
}

// the picture was measured in zoomed units, 1.782 across and 3 down
function realY(zy) { return 1980 + zy / 3; }

var red = "", blue = "", green = "";
for (var x = left; x <= right; x++) {
  var zx = (x - 1040) * 1.782;
  var px = x + 0.5; // keeps the 1px columns on the pixel grid so they stay full colour

  var r = lookup(redPeaks, zx);
  if (r !== null) {
    var rTop = 648 - (648 - r) * (0.7 + 0.3 * rnd());
    var rLow = 640 + rnd() * 30;
    red += "M" + px + " " + realY(rLow).toFixed(1) + "V" + realY(rTop).toFixed(1);
  }

  var b = lookup(bluePeaks, zx);
  if (b !== null && b < 670) {
    var bTop = 640 - (640 - b) * (0.84 + 0.16 * rnd());
    if (rnd() > 0.93) bTop = 640 - (640 - b) * 0.55;
    var floor = lookup(blueFloor, zx);
    if (floor === null) floor = 640;
    if (bTop < floor) blue += "M" + px + " " + realY(floor).toFixed(1) + "V" + realY(bTop).toFixed(1);
  }

  // green sits on the axis all year, and reaches up to the cap in the cooling months
  green += "M" + px + " " + base + "V" + realY(668).toFixed(1);
  if (zx > 530 && zx < 1350) {
    var solid = zx < 850 || zx > 960 ? rnd() > 0.12 : rnd() > 0.75;
    if (solid) green += "M" + px + " " + realY(670).toFixed(1) + "V" + realY(632 + rnd() * 6).toFixed(1);
    else if (zx < 1200) green += "M" + px + " " + realY(642).toFixed(1) + "V" + realY(632).toFixed(1);
  }
}

var parts = [[red, "#f00000"], [blue, "#0000dc"], [green, "#0a8a1e"]];
var group = document.getElementById("series");
parts.forEach(function (p) {
  var path = document.createElementNS("http://www.w3.org/2000/svg", "path");
  path.setAttribute("d", p[0]);
  path.setAttribute("stroke", p[1]);
  path.setAttribute("fill", "none");
  group.appendChild(path);
});
```
